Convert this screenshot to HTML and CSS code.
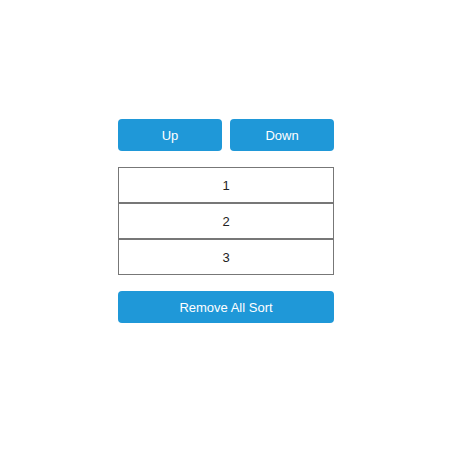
FILE: index.html
```html
<!DOCTYPE html>
<html>
<head>
<meta charset="utf-8">
<link rel="stylesheet" href="styles.css">
</head>
<body>
<div class="panel">
  <div class="controls">
    <button class="btn half">Up</button>
    <button class="btn half">Down</button>
  </div>
  <div class="list">
    <div class="row">1</div>
    <div class="row">2</div>
    <div class="row">3</div>
  </div>
  <button class="btn wide">Remove All Sort</button>
</div>
</body>
</html>
```
FILE: styles.css
```css
html, body {
  margin: 0;
  padding: 0;
  background: #fff;
}
body {
  font-family: "Liberation Sans", Arial, sans-serif;
  font-size: 13px;
  color: #222;
}
.panel {
  width: 216px;
  margin: 119px 0 0 118px;
  display: flex;
  flex-direction: column;
  gap: 16px;
}
.controls {
  display: flex;
  gap: 8px;
}
.btn {
  height: 32px;
  border: none;
  border-radius: 4px;
  background: #1f98d8;
  color: #fff;
  font-family: "Liberation Sans", Arial, sans-serif;
  font-size: 13px;
  padding: 0;
}
.half {
  flex: 1;
}
.wide {
  flex: none;
  width: 100%;
}
.list {
  display: flex;
  flex-direction: column;
}
.row {
  height: 34px;
  border: 1px solid #777;
  display: flex;
  align-items: center;
  justify-content: center;
}
```
